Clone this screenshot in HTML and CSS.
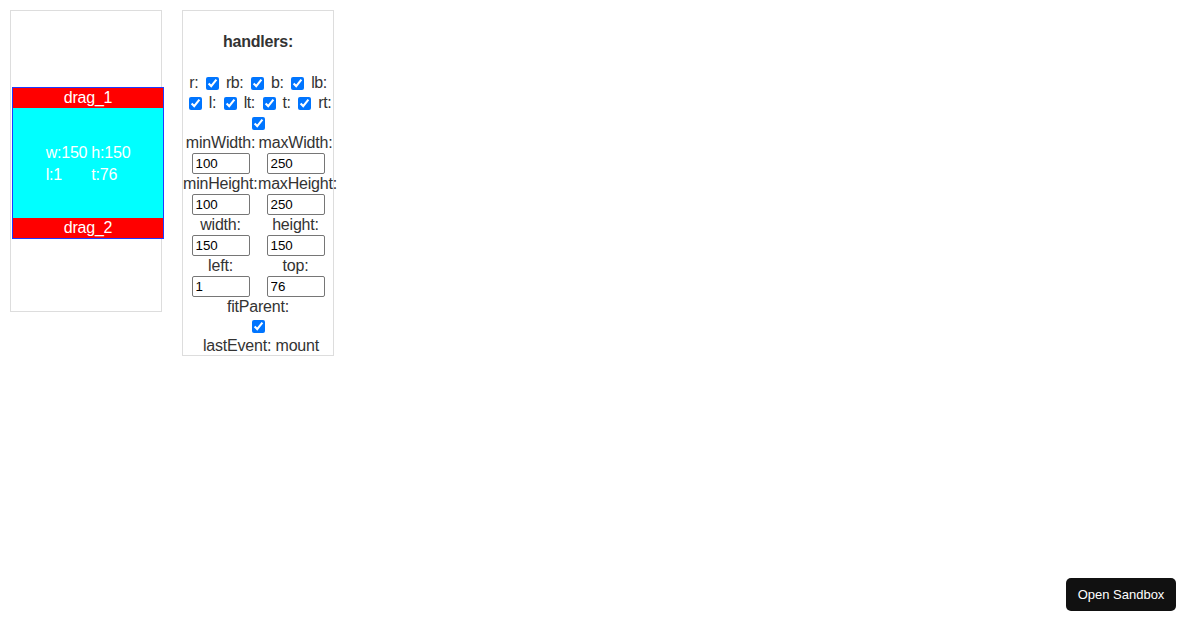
FILE: index.html
```html
<!DOCTYPE html>
<html>
<head>
<meta charset="utf-8">
<link rel="stylesheet" href="styles.css">
</head>
<body>
<div class="demo">
  <div class="canvas">
    <div class="resizable" style="left:1px;top:76px;width:150px;height:150px">
      <div class="drag">drag_1</div>
      <div class="content">
        <table>
          <tr><td>w:150</td><td>h:150</td></tr>
          <tr><td>l:1</td><td>t:76</td></tr>
        </table>
      </div>
      <div class="drag">drag_2</div>
    </div>
  </div>
  <div class="panel">
    <h4 class="title">handlers:</h4>
    <div class="handlers">r: <input type="checkbox" checked> rb: <input type="checkbox" checked> b: <input type="checkbox" checked> lb: <input type="checkbox" checked> l: <input type="checkbox" checked> lt: <input type="checkbox" checked> t: <input type="checkbox" checked> rt: <input type="checkbox" checked></div>
    <div class="fields">
      <div class="field"><div class="label">minWidth:</div><input class="num" type="text" value="100"></div>
      <div class="field"><div class="label">maxWidth:</div><input class="num" type="text" value="250"></div>
      <div class="field"><div class="label">minHeight:</div><input class="num" type="text" value="100"></div>
      <div class="field"><div class="label">maxHeight:</div><input class="num" type="text" value="250"></div>
      <div class="field"><div class="label">width:</div><input class="num" type="text" value="150"></div>
      <div class="field"><div class="label">height:</div><input class="num" type="text" value="150"></div>
      <div class="field"><div class="label">left:</div><input class="num" type="text" value="1"></div>
      <div class="field"><div class="label">top:</div><input class="num" type="text" value="76"></div>
    </div>
    <div class="fit">
      <div class="label">fitParent:</div>
      <div class="check-line"><input type="checkbox" checked></div>
    </div>
    <div class="last">lastEvent: mount</div>
  </div>
</div>
<button class="sandbox">Open Sandbox</button>
</body>
</html>
```

FILE: styles.css
```css
html, body {
  margin: 0;
  padding: 0;
  background: #fff;
}
body {
  font-family: "Liberation Sans", Arial, sans-serif;
  font-size: 16px;
  color: #333;
}
.demo {
  display: flex;
  align-items: flex-start;
  gap: 20px;
  padding: 10px;
  letter-spacing: -0.2px;
}
.canvas {
  width: 150px;
  height: 300px;
  border: 1px solid #ddd;
  position: relative;
}
.resizable {
  position: absolute;
  border: 1px solid #1f3bff;
  display: flex;
  flex-direction: column;
}
.drag {
  height: 20px;
  line-height: 20px;
  background: #ff0000;
  color: #fff;
  text-align: center;
}
.content {
  flex: 1;
  background: #00ffff;
  color: #fff;
  display: flex;
  align-items: center;
  justify-content: center;
}
.content table {
  font-size: 16px;
  color: #fff;
  margin-top: 1px;
}
.content td {
  text-align: left;
}
.panel {
  width: 150px;
  border: 1px solid #ddd;
  text-align: center;
}
.title {
  font-size: 16px;
  font-weight: bold;
  margin: 22.28px 0 21.28px;
}
.handlers {
  line-height: 20px;
  letter-spacing: -0.5px;
}
.handlers input {
  margin: 3px 3px 3px 4px;
  vertical-align: -2px;
}
.fields {
  display: grid;
  grid-template-columns: 75px 75px;
}
.field {
  display: flex;
  flex-direction: column;
  align-items: center;
}
.field .label {
  width: 75px;
  line-height: 20px;
  white-space: nowrap;
  text-align: center;
}
.fields .field:nth-child(3) .label,
.fields .field:nth-child(4) .label {
  text-align: left;
}
.num {
  display: block;
  width: 58px;
  height: 21px;
  box-sizing: border-box;
  margin: 0;
  padding: 1px 3px;
  font-family: "Liberation Sans", Arial, sans-serif;
  font-size: 13.33px;
  letter-spacing: 0;
  color: #000;
  border: 1px solid #767676;
  border-radius: 2px;
}
.fit .label {
  line-height: 20px;
}
.check-line {
  height: 20px;
  display: flex;
  align-items: center;
  justify-content: center;
}
.check-line input {
  margin: 3px 3px 3px 4px;
}
.last {
  line-height: 18px;
  padding-left: 6px;
}
.sandbox {
  position: fixed;
  right: 24px;
  bottom: 19px;
  width: 110px;
  height: 33px;
  background: #111;
  color: #fff;
  border: none;
  border-radius: 5px;
  font-family: "Liberation Sans", Arial, sans-serif;
  font-size: 13px;
  padding: 0;
  cursor: pointer;
}
```
